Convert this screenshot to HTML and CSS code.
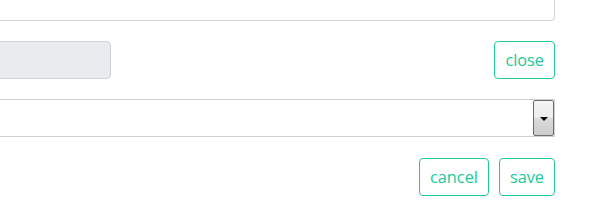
FILE: index.html
```html
<!DOCTYPE html>
<html>
<head>
<meta charset="utf-8">
<link rel="stylesheet" href="styles.css">
</head>
<body>
<div class="form">
  <div class="row">
    <div class="input"></div>
  </div>
  <div class="row split">
    <div class="input readonly"></div>
    <button class="btn">close</button>
  </div>
  <div class="row">
    <div class="select">
      <span class="arrow"><span class="tri"></span></span>
    </div>
  </div>
  <div class="row actions">
    <button class="btn">cancel</button>
    <button class="btn">save</button>
  </div>
</div>
</body>
</html>
```
FILE: styles.css
```css
html, body {
  margin: 0;
  padding: 0;
  background: #fff;
  overflow: hidden;
}
body {
  font-family: "Open Sans", "Noto Sans", sans-serif;
}
.form {
  width: 575px;
  margin-left: -20px;
  margin-top: -17px;
  display: flex;
  flex-direction: column;
  gap: 20px;
}
.row {
  display: flex;
  height: 38px;
}
.split {
  justify-content: space-between;
}
.actions {
  justify-content: flex-end;
  gap: 10px;
  margin-top: 1px;
}
.input {
  flex: 1;
  box-sizing: border-box;
  height: 38px;
  border: 1px solid #ced4da;
  border-radius: 4px;
  background: #fff;
}
.input.readonly {
  flex: 0 0 131px;
  background: #e9ecef;
}
.btn {
  box-sizing: border-box;
  height: 38px;
  padding: 1px 10px 0;
  border: 1px solid #20c997;
  border-radius: 4px;
  background: #fff;
  color: #20c997;
  font-family: "Open Sans", "Noto Sans", sans-serif;
  font-size: 16.3px;
  line-height: 35px;
}
.select {
  flex: 1;
  box-sizing: border-box;
  height: 38px;
  border-top: 1px solid #cfcfcf;
  border-bottom: 1px solid #cfcfcf;
  border-right: 1px solid #cfcfcf;
  display: flex;
  justify-content: flex-end;
}
.arrow {
  box-sizing: border-box;
  width: 21px;
  height: 36px;
  border: 1px solid #6e6e6e;
  border-radius: 2px;
  background: linear-gradient(#f4f4f4 0%, #ececec 50%, #dadada 51%, #cccccc 100%);
  display: flex;
  align-items: center;
  justify-content: center;
}
.tri {
  width: 0;
  height: 0;
  border-left: 4px solid transparent;
  border-right: 4px solid transparent;
  border-top: 4px solid #000;
  margin-top: 1px;
}
```
